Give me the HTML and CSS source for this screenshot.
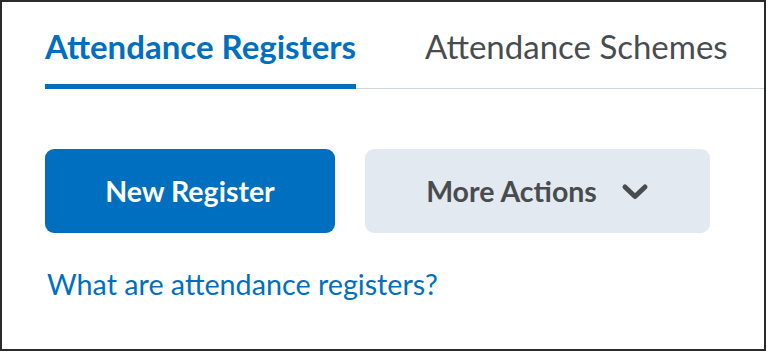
FILE: index.html
```html
<!DOCTYPE html>
<html>
<head>
<meta charset="utf-8">
<link rel="stylesheet" href="styles.css">
</head>
<body>
<div class="frame">
  <div class="tabs">
    <div class="tab active">Attendance Registers</div>
    <div class="tab">Attendance Schemes</div>
  </div>
  <div class="actions">
    <button class="btn primary">New Register</button>
    <button class="btn secondary">More Actions
      <svg class="chev" width="28" height="18" viewBox="0 0 28 18"><path d="M4 4 L14 13.5 L24 4" fill="none" stroke="#494c4e" stroke-width="5" stroke-linecap="round" stroke-linejoin="round"/></svg>
    </button>
  </div>
  <a class="help" href="#">What are attendance registers?</a>
</div>
</body>
</html>
```
FILE: styles.css
```css
* { box-sizing: border-box; }
html, body { margin: 0; padding: 0; background: #fff; }
.frame {
  width: 766px;
  height: 351px;
  border: 2px solid #2b2b2b;
  background: #fff;
  font-family: Lato, "Open Sans", sans-serif;
  padding: 0 0 0 43px;
  overflow: hidden;
}
.tabs {
  display: flex;
  gap: 69px;
  border-bottom: 1px solid #cdd5dc;
  padding-top: 24px;
}
.tab {
  font-size: 33px;
  line-height: 40px;
  color: #494c4e;
  padding-bottom: 18px;
  border-bottom: 5px solid transparent;
  margin-bottom: -1px;
  white-space: nowrap;
}
.tab.active {
  color: #006fbf;
  font-weight: 700;
  border-bottom-color: #006fbf;
}
.actions {
  display: flex;
  gap: 30px;
  margin-top: 60px;
}
.btn {
  font-family: Lato, "Open Sans", sans-serif;
  font-weight: 700;
  font-size: 28.5px;
  height: 84px;
  border: none;
  border-radius: 9px;
  display: flex;
  align-items: center;
  justify-content: center;
  padding: 0;
}
.primary {
  width: 290px;
  background: #006fbf;
  color: #fff;
}
.secondary {
  width: 345px;
  background: #e3e9f1;
  color: #494c4e;
  gap: 24px;
}
.chev { display: block; margin-top: 2px; }
.help {
  display: block;
  margin-top: 34px;
  margin-left: 2px;
  font-size: 28.7px;
  color: #006fbf;
  text-decoration: none;
}
```
